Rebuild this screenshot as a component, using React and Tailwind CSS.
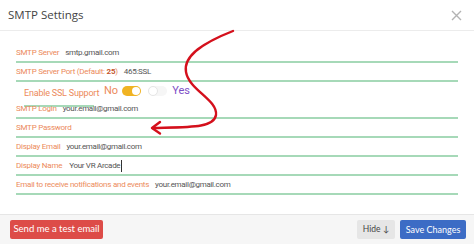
import React from "react";

const LABEL = "text-[8px] tracking-[-0.25px] text-[#ec8a5b] whitespace-nowrap";
const VALUE = "text-[8px] tracking-[-0.3px] text-[#555] whitespace-nowrap";

const Row = ({ label, value, children, gap = "gap-[6px]" }) => (
  <div className={`flex items-center ${gap} h-[19px] border-b-2 border-[#a6d9b8]`}>
    {children || <span className={LABEL}>{label}</span>}
    {value && <span className={VALUE}>{value}</span>}
  </div>
);

const Toggle = ({ on }) =>
  on ? (
    <div className="w-[19px] h-[10px] rounded-full bg-[#f0b323] flex items-center justify-end pr-[1px]">
      <div className="w-[8px] h-[8px] rounded-full bg-white" />
    </div>
  ) : (
    <div className="w-[19px] h-[10px] rounded-full bg-[#f6f6f6] flex items-center">
      <div className="w-[10px] h-[10px] rounded-full bg-white border border-[#e6e6e6]" />
    </div>
  );

const App = () => {
  return (
    <div className="relative w-[474px] h-[244px] bg-white overflow-hidden" style={{ fontFamily: "Roboto, 'Liberation Sans', sans-serif" }}>
      <header className="h-[31px] flex items-center justify-between pl-[8px] pr-[12px] border-b border-[#ececec]">
        <h1 className="text-[11.5px] text-[#444]" style={{ fontFamily: "'Open Sans', sans-serif" }}>SMTP Settings</h1>
        <svg width="11" height="11" viewBox="0 0 11 11" className="mt-[1px]">
          <path d="M1 1 L10 10 M10 1 L1 10" stroke="#b3b3b3" strokeWidth="1.4" />
        </svg>
      </header>

      <main className="pl-[16px] pr-[16px] pt-[13px] h-[183px]">
        <Row label="SMTP Server" value="smtp.gmail.com" />
        <Row value="465:SSL">
          <span className={LABEL}>
            SMTP Server Port (Default: <b className="text-[#c4552c]">25</b>)
          </span>
        </Row>
        <div className="flex items-center h-[18px]">
          <div className="ml-[8px] w-[70px] shrink-0 border-b-2 border-[#a6d9b8] pb-[2px] mt-[4px]">
            <span className="text-[9px] tracking-[-0.2px] text-[#ec8a5b] whitespace-nowrap">Enable SSL Support</span>
          </div>
          <span className="ml-[10px] text-[11px] text-[#ec8a5b]">No</span>
          <div className="ml-[4px]"><Toggle on /></div>
          <div className="ml-[7px]"><Toggle /></div>
          <span className="ml-[5px] text-[11px] text-[#7e4fc6]">Yes</span>
        </div>
        <Row label="SMTP Login" value="your.email@gmail.com" />
        <Row label="SMTP Password" />
        <Row label="Display Email" value="your.email@gmail.com" />
        <Row label="Display Name">
          <span className={LABEL}>Display Name</span>
          <span className={`${VALUE} ml-[1px] border-r border-[#333] pr-[0.5px]`}>Your VR Arcade</span>
        </Row>
        <Row label="Email to receive notifications and events" value="your.email@gmail.com" />
      </main>

      <footer className="h-[30px] bg-[#f6f6f6] border-t border-[#e6e6e6] flex items-start justify-between pt-[5px] pl-[10px] pr-[8px]" style={{ fontFamily: "Lato, sans-serif" }}>
        <button className="h-[19px] w-[93px] bg-[#dd4c48] text-white text-[9.5px] rounded-[2px]">Send me a test email</button>
        <div className="flex gap-[5px]">
          <button className="h-[19px] w-[38px] bg-[#e6e6e6] text-[#444] text-[8.5px] rounded-[2px]">Hide ↓</button>
          <button className="h-[19px] w-[66px] bg-[#3c6cc5] text-white text-[9px] rounded-[2px]">Save Changes</button>
        </div>
      </footer>

      <svg className="absolute inset-0 pointer-events-none" width="474" height="244" viewBox="0 0 474 244">
        <path
          d="M233 31 C205 42 183 55 186 72 C189 90 218 100 216 115 C214 128 190 127 153 128"
          fill="none"
          stroke="#d4101c"
          strokeWidth="2.4"
          strokeLinecap="round"
        />
        <path d="M160 122 L152 128 L160 133.5" fill="none" stroke="#d4101c" strokeWidth="2.4" strokeLinecap="round" strokeLinejoin="round" />
      </svg>
    </div>
  );
};

export default App;
